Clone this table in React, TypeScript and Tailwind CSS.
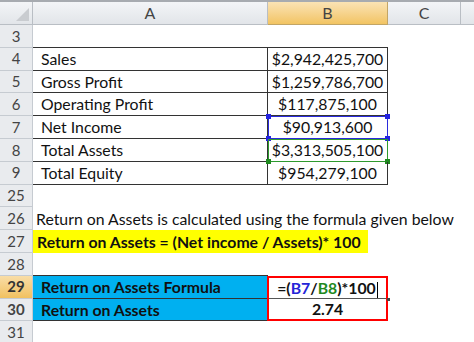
import React from 'react';

const font = { fontFamily: 'Lato, "Open Sans", sans-serif' };

const RowHead = ({ n, active }: { n: number; active?: boolean }) => (
  <div
    className={`w-[33px] shrink-0 flex items-center justify-center border-r border-b border-[#c6cbd1] text-[15px] ${
      active ? 'bg-gradient-to-b from-[#f9dda6] to-[#f1c15f] text-[#333]' : 'bg-[#e9ebee] text-[#444]'
    }`}
  >
    {n}
  </div>
);

const Handle = ({ color, pos }: { color: string; pos: string }) => (
  <span className={`absolute w-[5px] h-[5px] ${color} ${pos}`} />
);

const tableRows = [
  { n: 4, label: 'Sales', value: '$2,942,425,700' },
  { n: 5, label: 'Gross Profit', value: '$1,259,786,700' },
  { n: 6, label: 'Operating Profit', value: '$117,875,100' },
  { n: 7, label: 'Net Income', value: '$90,913,600' },
  { n: 8, label: 'Total Assets', value: '$3,313,505,100' },
  { n: 9, label: 'Total Equity', value: '$954,279,100' },
];

export default function App() {
  return (
    <div className="w-[474px] h-[342px] overflow-hidden bg-white text-[#111]" style={font}>
      {/* column headers */}
      <div className="flex h-[25px] border-t-2 border-[#a7abb0] text-[16px] text-[#444]">
        <div className="w-[33px] shrink-0 relative bg-gradient-to-b from-[#f3f5f7] to-[#e2e5e9] border-r border-b border-[#b9bec4]">
          <div
            className="absolute right-[3px] bottom-[3px] w-[13px] h-[13px] bg-[#c9ccd0]"
            style={{ clipPath: 'polygon(100% 0, 100% 100%, 0 100%)' }}
          />
        </div>
        <div className="w-[235px] shrink-0 flex items-center justify-center bg-gradient-to-b from-[#f3f5f7] to-[#e2e5e9] border-r border-b border-[#b9bec4]">
          A
        </div>
        <div className="w-[120px] shrink-0 flex items-center justify-center bg-gradient-to-b from-[#fae3b4] to-[#f2c462] border-r border-b border-[#c2a566]">
          B
        </div>
        <div className="w-[73px] shrink-0 flex items-center justify-center bg-gradient-to-b from-[#f3f5f7] to-[#e2e5e9] border-r border-b border-[#b9bec4]">
          C
        </div>
        <div className="flex-1 bg-gradient-to-b from-[#f3f5f7] to-[#e2e5e9] border-b border-[#b9bec4]" />
      </div>

      {/* row 3 */}
      <div className="flex h-[22.8px]">
        <RowHead n={3} />
        <div className="w-[235px] shrink-0 border-b border-[#333]" />
        <div className="w-[120px] shrink-0 border-b border-[#333]" />
      </div>

      {tableRows.map((r) => (
        <div key={r.n} className="flex h-[22.8px] text-[15.8px]">
          <RowHead n={r.n} />
          <div className="w-[235px] shrink-0 border-b border-r border-[#333] pl-[8px] flex items-center">
            {r.label}
          </div>
          <div
            className={`w-[120px] shrink-0 relative flex items-center justify-center border-r border-b border-[#333] ${
              r.n === 7 ? 'outline outline-1 outline-[#2b2bdc] -outline-offset-1' : ''
            } ${r.n === 8 ? 'outline outline-1 outline-[#2e9a2e] -outline-offset-1' : ''}`}
          >
            {r.value}
            {r.n === 7 && (
              <>
                <Handle color="bg-[#2424e0]" pos="-left-[2px] -top-[2px]" />
                <Handle color="bg-[#2424e0]" pos="-right-[3px] -top-[2px]" />
                <Handle color="bg-[#2424e0]" pos="-left-[2px] -bottom-[3px]" />
                <Handle color="bg-[#2424e0]" pos="-right-[3px] -bottom-[3px]" />
              </>
            )}
            {r.n === 8 && (
              <>
                <Handle color="bg-[#1f8a1f]" pos="-left-[2px] -bottom-[3px]" />
                <Handle color="bg-[#1f8a1f]" pos="-right-[3px] -bottom-[3px]" />
              </>
            )}
          </div>
        </div>
      ))}

      <div className="flex h-[22.8px]">
        <RowHead n={25} />
      </div>

      <div className="flex h-[22.8px] text-[15.8px]">
        <RowHead n={26} />
        <div className="pl-[3px] flex items-center whitespace-nowrap">
          Return on Assets is calculated using the formula given below
        </div>
      </div>

      <div className="flex h-[22.8px] text-[15.8px]">
        <RowHead n={27} />
        <div className="w-[335px] shrink-0 bg-[#ffff00] pl-[4px] flex items-center whitespace-nowrap font-bold">
          Return on Assets = (Net income / Assets)* 100
        </div>
      </div>

      <div className="flex h-[22.8px]">
        <RowHead n={28} />
        <div className="w-[235px] shrink-0 border-b border-[#333]" />
      </div>

      <div className="flex h-[22.8px] text-[15.8px] font-bold">
        <RowHead n={29} active />
        <div className="w-[235px] shrink-0 bg-[#00b0f0] border-b border-[#333] pl-[8px] flex items-center">
          Return on Assets Formula
        </div>
        <div className="w-[121px] -ml-[1px] shrink-0 relative flex items-center justify-center border-2 border-b-0 border-[#ff0000]">
          <span>
            =(<span className="text-[#2424d8]">B7</span>/<span className="text-[#1f8a1f]">B8</span>)*100
            <span className="inline-block align-middle w-[1px] h-[16px] bg-black ml-[1px]" />
          </span>
          <span className="absolute left-0 right-0 bottom-0 h-[1px] bg-[#555]" />
          <span className="absolute -right-[4px] bottom-[-2px] w-[3px] h-[3px] bg-[#444]" />
        </div>
      </div>

      <div className="flex h-[22.8px] text-[15.8px] font-bold">
        <RowHead n={30} />
        <div className="w-[235px] shrink-0 bg-[#00b0f0] border-b border-[#333] pl-[8px] flex items-center">
          Return on Assets
        </div>
        <div className="w-[121px] -ml-[1px] shrink-0 flex items-center justify-center border-2 border-t-0 border-[#ff0000]">
          2.74
        </div>
      </div>

      <div className="flex h-[22.8px]">
        <RowHead n={31} />
      </div>
    </div>
  );
}
